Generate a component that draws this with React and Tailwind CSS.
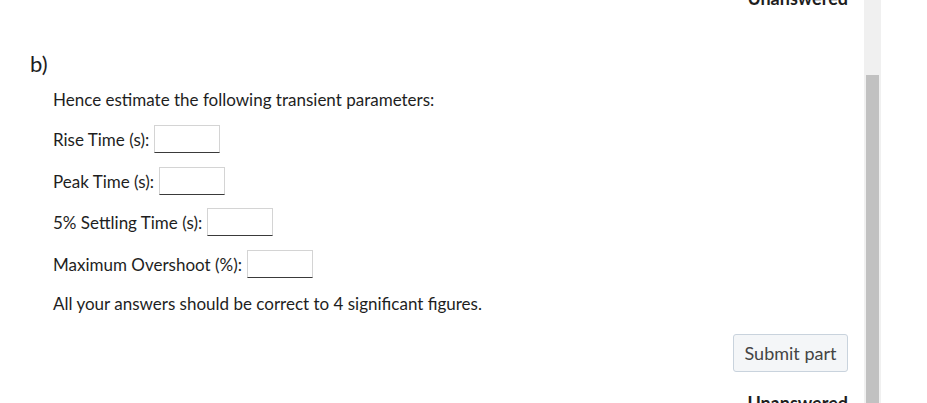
import React from "react";

function Field({ label, mt }) {
  return (
    <div className={`flex items-center h-[28px] ${mt}`}>
      <span className="pt-[1px]">{label}</span>
      <span className="ml-[5px] w-[66px] h-[28px] border border-[#d4d4d4] border-b-[#3a3a3a] bg-white box-border" />
    </div>
  );
}

export default function App() {
  return (
    <div
      className="w-[927px] h-[403px] overflow-hidden bg-white flex text-[#1e1e1e]"
      style={{ fontFamily: "Lato, 'Open Sans', sans-serif" }}
    >
      <div className="w-[864px] h-full overflow-hidden flex flex-col pr-[16px] text-[17px] leading-[24px]">
        <div className="text-right font-bold text-[18px] -mt-[14px] h-[24px] shrink-0">Unanswered</div>
        <div className="mt-[42px] pl-[30px] text-[22px] leading-[24px] h-[24px] shrink-0">b)</div>
        <div className="pl-[53px] flex flex-col shrink-0">
          <div className="mt-[12px] h-[24px]">Hence estimate the following transient parameters:</div>
          <Field label="Rise Time (s):" mt="mt-[13px]" />
          <Field label="Peak Time (s):" mt="mt-[14px]" />
          <Field label="5% Settling Time (s):" mt="mt-[13px]" />
          <Field label="Maximum Overshoot (%):" mt="mt-[14px]" />
          <div className="mt-[14px] h-[24px]">All your answers should be correct to 4 significant figures.</div>
        </div>
        <div className="flex justify-end mt-[18px] shrink-0">
          <button className="w-[115px] h-[38px] rounded-[3px] border border-[#c9d3dd] bg-[#f4f6f8] text-[#444444] text-[18px]">
            Submit part
          </button>
        </div>
        <div className="text-right font-bold text-[18px] mt-[19px] h-[24px] shrink-0">Unanswered</div>
      </div>
      <div className="w-[17px] h-full bg-[#f0f0f0] flex flex-col items-center shrink-0">
        <div className="h-[75px] shrink-0" />
        <div className="w-[13px] flex-1 bg-[#c1c1c1]" />
      </div>
      <div className="flex-1" />
    </div>
  );
}
